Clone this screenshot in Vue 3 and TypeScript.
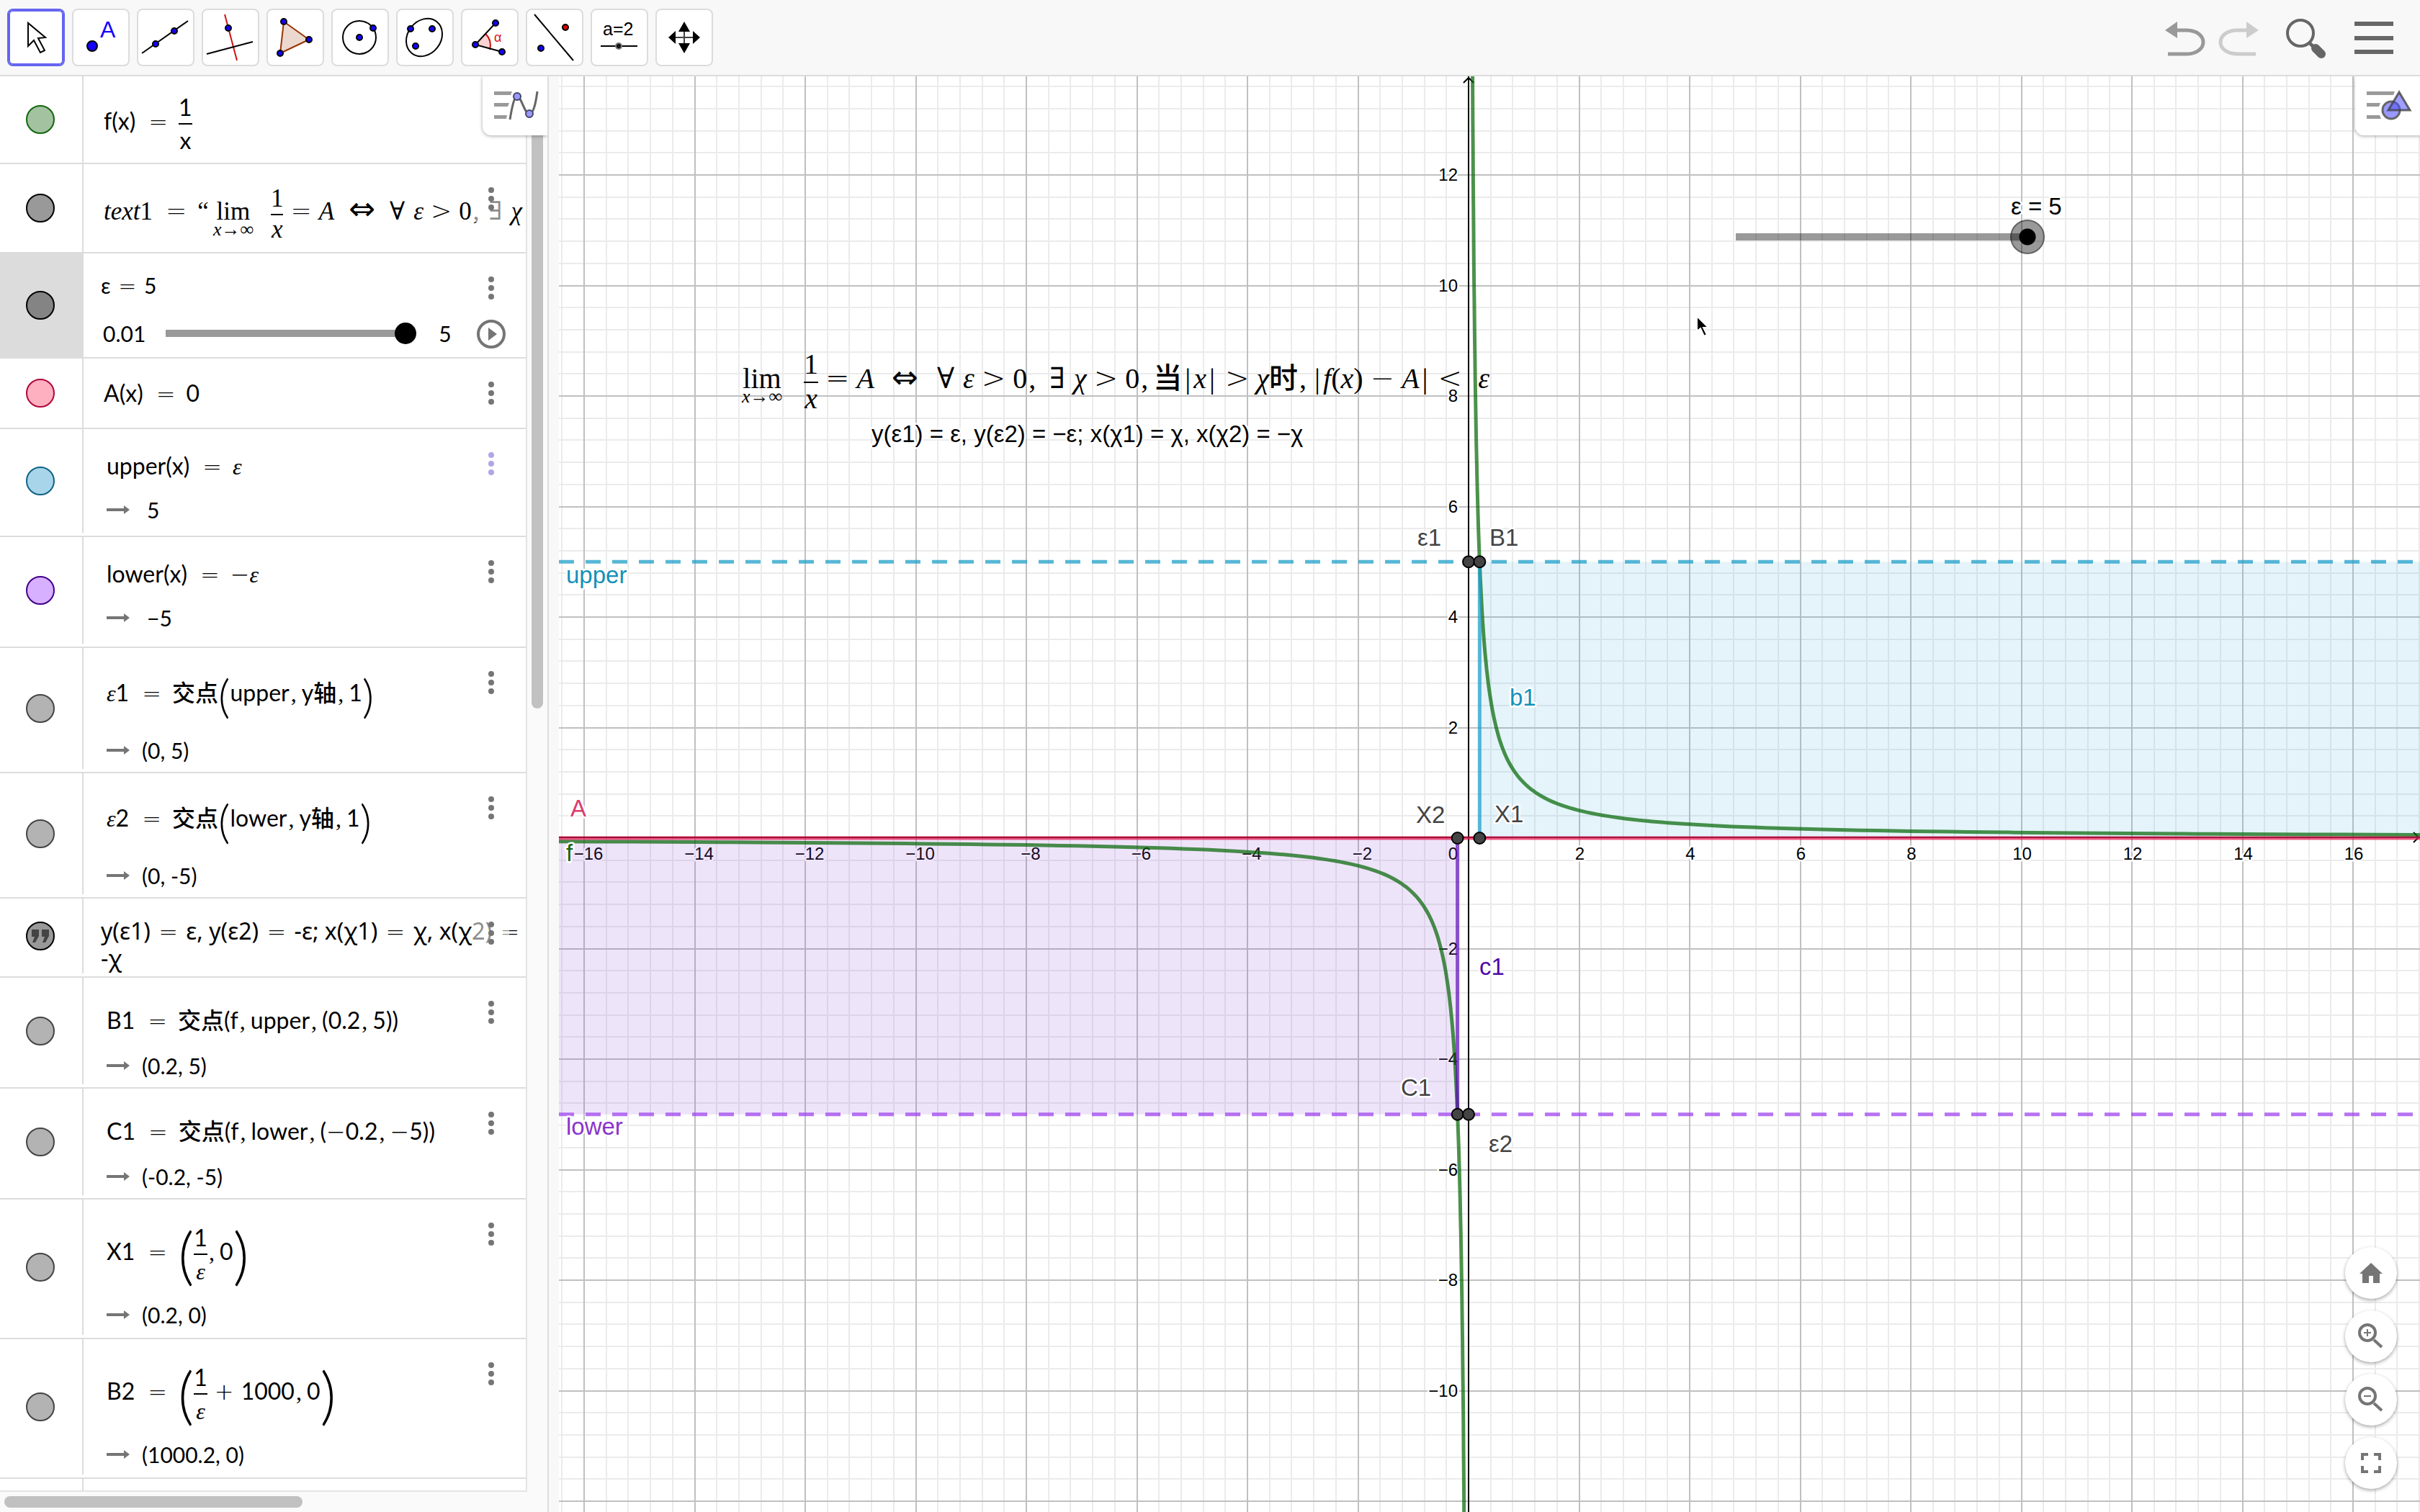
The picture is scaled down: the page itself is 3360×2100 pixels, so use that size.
<script setup lang="ts">
import { computed, h, onBeforeUnmount, onMounted, ref } from 'vue'
import type { FunctionalComponent, VNode } from 'vue'

/* ---------- Formula typesetting ---------- */

type Token =
  | { k: 'sans' | 'it' | 'rm' | 'def' | 'rel' | 'wide' | 'bin' | 'cjk' | 'punct' | 'big' | 'huge' | 'bar' | 'quote' | 'gap' | 'far'; v: string }
  | { k: 'frac'; n: Token; d: Token }
  | { k: 'lim'; v: string; sub: string }

const t = (k: Exclude<Token['k'], 'frac' | 'lim'>, v: string): Token => ({ k, v })
const frac = (n: Token, d: Token): Token => ({ k: 'frac', n, d })

const renderToken = (tok: Token): VNode => {
  if (tok.k === 'frac') {
    return h('span', { class: 'm-frac' }, [
      h('span', { class: 'm-num' }, [renderToken(tok.n)]),
      h('span', { class: 'm-den' }, [renderToken(tok.d)]),
    ])
  }
  if (tok.k === 'lim') {
    return h('span', { class: 'm-lim' }, [h('span', tok.v), h('span', { class: 'm-sub' }, tok.sub)])
  }
  return h('span', { class: 'm-' + tok.k }, tok.v)
}

const MathLine: FunctionalComponent<{ tokens: Token[] }> = (props) =>
  h('span', { class: 'm-line' }, props.tokens.map(renderToken))
MathLine.props = ['tokens']

const limitHead: Token[] = [
  { k: 'lim', v: 'lim', sub: 'x→∞' },
  frac(t('rm', '1'), t('it', 'x')),
  t('rel', '='),
  t('it', 'A'),
  t('wide', '⇔'),
  t('rm', '∀'),
  t('gap', 'ε'),
  t('rel', '>'),
  t('rm', '0'),
  t('punct', ','),
  t('far', '∃'),
  t('gap', 'χ'),
]

const limitStatement: Token[] = [
  ...limitHead,
  t('rel', '>'),
  t('rm', '0'),
  t('punct', ','),
  t('cjk', '当'),
  t('bar', '|'),
  t('it', 'x'),
  t('bar', '|'),
  t('rel', '>'),
  t('it', 'χ'),
  t('cjk', '时'),
  t('punct', ','),
  t('bar', '|'),
  t('it', 'f'),
  t('rm', '('),
  t('it', 'x'),
  t('rm', ')'),
  t('rel', '−'),
  t('it', 'A'),
  t('bar', '|'),
  t('rel', '<'),
  t('gap', 'ε'),
]

/* ---------- Algebra list ---------- */

interface Row {
  id: string
  kind: string
  fill: string
  line: string
  tokens?: Token[]
  text?: string
  out?: string
  slider?: boolean
  quote?: boolean
  menu?: 'grey' | 'lilac'
}

const grey = { fill: '#b3b3b3', line: '#444444' }
const eq = t('def', '=')

const rows: Row[] = [
  { id: 'f', kind: 'first', fill: '#a3c2a0', line: '#13660f', tokens: [t('sans', 'f(x)'), eq, frac(t('sans', '1'), t('sans', 'x'))] },
  { id: 'text1', kind: 'serif', fill: '#999999', line: '#000000', menu: 'grey', tokens: [t('it', 'text'), t('rm', '1'), eq, t('quote', '“'), ...limitHead] },
  { id: 'eps', kind: 'slider', fill: '#848484', line: '#000000', slider: true, text: 'ε = 5', menu: 'grey' },
  { id: 'A', kind: 'plain', fill: '#ffb0c0', line: '#b0063c', menu: 'grey', tokens: [t('sans', 'A(x)'), eq, t('sans', '0')] },
  { id: 'upper', kind: 'func', fill: '#a9d5ea', line: '#0f6384', menu: 'lilac', tokens: [t('sans', 'upper(x)'), eq, t('it', 'ε')], out: '5' },
  { id: 'lower', kind: 'func tall', fill: '#d7b0ff', line: '#40008c', menu: 'grey', tokens: [t('sans', 'lower(x)'), eq, t('bin', '−'), t('it', 'ε')], out: '−5' },
  { id: 'eps1', kind: 'cut', ...grey, menu: 'grey', tokens: [t('it', 'ε'), t('sans', '1'), eq, t('cjk', '交点'), t('big', '('), t('sans', 'upper'), t('punct', ','), t('sans', 'y'), t('cjk', '轴'), t('punct', ','), t('sans', '1'), t('big', ')')], out: '(0, 5)' },
  { id: 'eps2', kind: 'cut', ...grey, menu: 'grey', tokens: [t('it', 'ε'), t('sans', '2'), eq, t('cjk', '交点'), t('big', '('), t('sans', 'lower'), t('punct', ','), t('sans', 'y'), t('cjk', '轴'), t('punct', ','), t('sans', '1'), t('big', ')')], out: '(0, -5)' },
  { id: 'text2', kind: 'note', fill: '#999999', line: '#000000', quote: true, menu: 'grey', text: 'y(ε1) = ε, y(ε2) = -ε; x(χ1) = χ, x(χ2) = -χ' },
  { id: 'B1', kind: 'point', ...grey, menu: 'grey', tokens: [t('sans', 'B1'), eq, t('cjk', '交点'), t('sans', '(f'), t('punct', ','), t('sans', 'upper'), t('punct', ','), t('sans', '(0.2'), t('punct', ','), t('sans', '5))')], out: '(0.2, 5)' },
  { id: 'C1', kind: 'point', ...grey, menu: 'grey', tokens: [t('sans', 'C1'), eq, t('cjk', '交点'), t('sans', '(f'), t('punct', ','), t('sans', 'lower'), t('punct', ','), t('sans', '('), t('bin', '−'), t('sans', '0.2'), t('punct', ','), t('bin', '−'), t('sans', '5))')], out: '(-0.2, -5)' },
  { id: 'X1', kind: 'pair', ...grey, menu: 'grey', tokens: [t('sans', 'X1'), eq, t('huge', '('), frac(t('sans', '1'), t('it', 'ε')), t('punct', ','), t('sans', '0'), t('huge', ')')], out: '(0.2, 0)' },
  { id: 'B2', kind: 'pair', ...grey, menu: 'grey', tokens: [t('sans', 'B2'), eq, t('huge', '('), frac(t('sans', '1'), t('it', 'ε')), t('rel', '+'), t('sans', '1000'), t('punct', ','), t('sans', '0'), t('huge', ')')], out: '(1000.2, 0)' },
]

/* Splits a plain caption so that each equals sign can be set wider. */
const pieces = (s: string) => s.split(/(=)/)

/* ---------- Graphics view ---------- */

const epsilon = ref(5)
const canvas = ref<HTMLElement | null>(null)
const size = ref({ w: 2584, h: 1994 })
const origin = { x: 1263, y: 1058 }
const unit = 76.75

let observer: ResizeObserver | undefined
onMounted(() => {
  const el = canvas.value
  if (!el) return
  observer = new ResizeObserver(() => {
    size.value = { w: el.clientWidth, h: el.clientHeight }
  })
  observer.observe(el)
})
onBeforeUnmount(() => observer?.disconnect())

const sx = (x: number) => origin.x + x * unit
const sy = (y: number) => origin.y - y * unit

const range = (from: number, to: number) => Array.from({ length: Math.max(0, to - from + 1) }, (_, i) => from + i)
const step = 0.4
const cols = computed(() => range(Math.ceil(-origin.x / unit / step), Math.floor((size.value.w - origin.x) / unit / step)))
const lines = computed(() => range(Math.ceil((origin.y - size.value.h) / unit / step), Math.floor(origin.y / unit / step)))

const gridPath = (major: boolean) => {
  const v = cols.value.filter((i) => i !== 0 && (i % 5 === 0) === major).map((i) => `M${Math.round(sx(i * step))} 0V${size.value.h}`)
  const w = lines.value.filter((i) => i !== 0 && (i % 5 === 0) === major).map((i) => `M0 ${Math.round(sy(i * step))}H${size.value.w}`)
  return [...v, ...w].join('')
}
const minorGrid = computed(() => gridPath(false))
const majorGrid = computed(() => gridPath(true))

const tick = (n: number) => (n < 0 ? '−' + -n : String(n))
const xTicks = computed(() => cols.value.filter((i) => i % 5 === 0 && i !== 0).map((i) => (i / 5) * 2))
const yTicks = computed(() => lines.value.filter((i) => i % 5 === 0 && i !== 0).map((i) => (i / 5) * 2).filter((n) => sy(n) < size.value.h - 30))

const branch = (sign: 1 | -1) => {
  const pts: string[] = []
  for (let u = -3; u <= 3; u += 0.04) {
    const x = sign * Math.exp(u)
    pts.push(`${sx(x).toFixed(1)} ${sy(1 / x).toFixed(1)}`)
  }
  return 'M' + pts.join('L')
}
const curve = branch(1) + branch(-1)

const chi = computed(() => 1 / epsilon.value)
const dots = computed(() => [
  [0, epsilon.value], [chi.value, epsilon.value], [-chi.value, 0],
  [chi.value, 0], [-chi.value, -epsilon.value], [0, -epsilon.value],
])

const labels = [
  { s: 'upper', x: 10, y: 704, c: '#1591b8' },
  { s: 'lower', x: 10, y: 1470, c: '#8a35cc' },
  { s: 'A', x: 16, y: 1028, c: '#dc3c6e' },
  { s: 'f', x: 10, y: 1090, c: '#146414' },
  { s: 'ε1', x: 1192, y: 652, c: '#444444' },
  { s: 'B1', x: 1292, y: 652, c: '#444444' },
  { s: 'b1', x: 1320, y: 874, c: '#1591b8' },
  { s: 'X2', x: 1190, y: 1037, c: '#444444' },
  { s: 'X1', x: 1299, y: 1036, c: '#444444' },
  { s: 'c1', x: 1278, y: 1248, c: '#4f0aa8' },
  { s: 'C1', x: 1169, y: 1416, c: '#444444' },
  { s: 'ε2', x: 1291, y: 1494, c: '#444444' },
  { s: 'y(ε1) = ε, y(ε2) = −ε; x(χ1) = χ, x(χ2) = −χ', x: 434, y: 508, c: '#000000' },
  { s: 'ε = 5', x: 2016, y: 192, c: '#000000' },
]

const tools = ['移动', '点', '直线', '垂线', '多边形', '圆', '椭圆', '角度', '轴对称', '滑动条', '移动视图']
</script>

<template>
  <div class="app">
    <header class="toolbar">
      <nav class="tools" aria-label="工具">
        <button v-for="(name, i) in tools" :key="name" type="button" class="tool" :class="{ selected: i === 0 }" :aria-label="name">
          <svg viewBox="2 2 76 76" class="tool-icon">
            <path v-if="i === 0" d="M29 20V52L37 44L46 61L52 58L43 41L53 40Z" fill="#fff" stroke="#000" stroke-width="2" />
            <g v-else-if="i === 1">
              <circle cx="28" cy="52" r="7" class="pt" />
              <text x="39" y="40" font-size="32" fill="#1500ff">A</text>
            </g>
            <g v-else-if="i === 2">
              <path d="M7 62L71 17" class="ln" /><circle cx="26" cy="49" r="4" class="pt" /><circle cx="52" cy="31" r="4" class="pt" />
            </g>
            <g v-else-if="i === 3">
              <path d="M32 8L49 72" stroke="#cc1414" stroke-width="2" /><path d="M7 63L71 46" class="ln" /><circle cx="37" cy="27" r="4" class="pt" />
            </g>
            <g v-else-if="i === 4">
              <path d="M24 18L59 43L19 62Z" fill="#ebd8cf" stroke="#993300" stroke-width="2" />
              <circle cx="24" cy="18" r="4" class="pt" /><circle cx="59" cy="43" r="4" class="pt" /><circle cx="19" cy="62" r="4" class="pt" />
            </g>
            <g v-else-if="i === 5">
              <circle cx="39" cy="40" r="23" class="ln" /><circle cx="39" cy="40" r="4" class="pt" /><circle cx="58" cy="27" r="4" class="pt" />
            </g>
            <g v-else-if="i === 6">
              <ellipse cx="39" cy="40" rx="28" ry="23" transform="rotate(-52 39 40)" class="ln" />
              <circle cx="20" cy="28" r="4" class="pt" /><circle cx="50" cy="28" r="4" class="pt" /><circle cx="27" cy="52" r="4" class="pt" />
            </g>
            <g v-else-if="i === 7">
              <path d="M20 50L34 35A21 21 0 0 1 40 57Z" fill="#fbd3d3" /><path d="M34 35A21 21 0 0 1 40 57" fill="none" stroke="#cc1414" stroke-width="2" />
              <path d="M48 20L20 50L57 60" class="ln" />
              <circle cx="48" cy="20" r="4" class="pt" /><circle cx="20" cy="50" r="4" class="pt" /><circle cx="57" cy="60" r="4" class="pt" />
              <text x="46" y="46" font-size="18" fill="#e01414">α</text>
            </g>
            <g v-else-if="i === 8">
              <path d="M12 8L66 72" class="ln" /><circle cx="55" cy="26" r="4" fill="#d40000" stroke="#000" stroke-width="2" /><circle cx="21" cy="55" r="4" class="pt" />
            </g>
            <g v-else-if="i === 9">
              <text x="17" y="37" font-size="25" fill="#000">a=2</text><path d="M14 52H65" class="ln" />
              <circle cx="39" cy="52" r="5" fill="#777" /><circle cx="39" cy="52" r="3" fill="#111" />
            </g>
            <g v-else>
              <path d="M40 24V56M24 40H56" stroke="#444" stroke-width="2" />
              <path d="M40 18L48 32H32ZM40 62L48 48H32ZM18 40L28 31V49ZM62 40L52 31V49Z" fill="#000" />
            </g>
          </svg>
        </button>
      </nav>
      <div class="actions">
        <div class="history">
          <button type="button" class="bare" aria-label="撤销">
            <svg width="68" height="60" viewBox="0 0 68 60"><path d="M10 53H35C67 53 67 20 35 20H20" fill="none" stroke="#999" stroke-width="5" /><path d="M6 20L23 8V31Z" fill="#999" /></svg>
          </button>
          <button type="button" class="bare" aria-label="重做">
            <svg width="68" height="60" viewBox="0 0 68 60"><path d="M58 53H33C1 53 1 20 33 20H48" fill="none" stroke="#ccc" stroke-width="5" /><path d="M62 20L45 8V31Z" fill="#ccc" /></svg>
          </button>
        </div>
        <button type="button" class="bare" aria-label="搜索">
          <svg width="68" height="60" viewBox="0 0 68 60"><circle cx="26" cy="24" r="18" fill="none" stroke="#666" stroke-width="4" /><path d="M38 37L46 45" stroke="#666" stroke-width="5" /><path d="M47 45L55 53" stroke="#666" stroke-width="12" stroke-linecap="round" /></svg>
        </button>
        <button type="button" class="bare" aria-label="菜单">
          <svg width="68" height="60" viewBox="0 0 68 60"><path d="M7 11H61M7 31H61M7 50H61" stroke="#666" stroke-width="6" /></svg>
        </button>
      </div>
    </header>

    <main class="views">
      <section class="algebra" aria-label="代数区">
        <div class="algebra-main">
          <ol class="rows">
            <li v-for="row in rows" :key="row.id" class="row" :class="row.kind">
              <div class="marble-cell">
                <button type="button" class="marble" :aria-label="'显示 ' + row.id" :style="{ background: row.fill, borderColor: row.line }">
                  <svg v-if="row.quote" width="26" height="20" viewBox="0 0 26 20"><path d="M1 1H11V10L6 19H2L5 11H1ZM15 1H25V10L20 19H16L19 11H15Z" fill="#444" /></svg>
                </button>
              </div>
              <div class="content">
                <p v-if="row.text" class="plain-text"><template v-for="(s, i) in pieces(row.text)" :key="i"><span v-if="s === '='" class="equals">=</span><template v-else>{{ s }}</template></template></p>
                <div v-else class="input-line"><MathLine :tokens="row.tokens || []" /></div>
                <template v-if="row.slider">
                  <div class="slider-line">
                    <span>0.01</span>
                    <input v-model.number="epsilon" type="range" min="0.01" max="5" step="0.01" aria-label="ε" class="row-range" />
                    <span>5</span>
                  </div>
                  <button type="button" class="play" aria-label="播放"><svg width="12" height="18" viewBox="0 0 12 18"><path d="M0 0L12 9L0 18Z" fill="#757575" /></svg></button>
                </template>
                <div v-if="row.out" class="output-line">
                  <svg width="32" height="12" viewBox="0 0 32 12"><path d="M0 4H24V0L32 6L24 12V8H0Z" fill="#757575" /></svg>
                  <output :class="{ number: !row.out.startsWith('(') }">{{ row.out }}</output>
                </div>
                <button v-if="row.menu" type="button" class="more" :class="row.menu" :aria-label="'更多 ' + row.id"><i></i><i></i><i></i></button>
              </div>
            </li>
            <li class="row rest"><div class="marble-cell"></div></li>
          </ol>
          <div class="rail"><div class="rail-thumb"></div></div>
        </div>
        <div class="foot"><div class="foot-thumb"></div></div>
        <button type="button" class="tab" aria-label="代数区样式">
          <svg width="90" height="82" viewBox="0 0 90 82">
            <path d="M16 21H41L39 26H16ZM16 37H37L35 42H16ZM16 54H34L33 59H16Z" fill="#999" />
            <path d="M38 60C41 42 44 28 48 28C54 28 58 52 65 52C71 52 74 36 76 21" fill="none" stroke="#666" stroke-width="3" />
            <circle cx="48" cy="28" r="5" class="node" /><circle cx="65" cy="52" r="5" class="node" />
          </svg>
        </button>
      </section>

      <section ref="canvas" class="graphics" aria-label="绘图区">
        <svg class="plot" :width="size.w" :height="size.h">
          <path :d="minorGrid" stroke="#ebebeb" stroke-width="2" />
          <path :d="majorGrid" stroke="#c0c0c0" stroke-width="2" />
          <path :d="`M${origin.x} 0V${size.h}M0 ${origin.y - 1}H${size.w}`" stroke="#000" stroke-width="2" />
          <path :d="`M${origin.x - 7} 9L${origin.x} 2L${origin.x + 7} 9M${size.w - 9} ${origin.y - 8}L${size.w - 2} ${origin.y - 1}L${size.w - 9} ${origin.y + 6}`" fill="none" stroke="#000" stroke-width="2" />
          <g class="ticks">
            <text v-for="n in xTicks" :key="'x' + n" :x="sx(n) + (n < 0 ? 6 : 1)" :y="origin.y + 30" text-anchor="middle">{{ tick(n) }}</text>
            <text v-for="n in yTicks" :key="'y' + n" :x="origin.x - 15" :y="sy(n) + 8" text-anchor="end">{{ tick(n) }}</text>
            <text :x="origin.x - 15" :y="origin.y + 30" text-anchor="end">0</text>
          </g>
          <rect :x="sx(chi)" :y="sy(epsilon)" :width="size.w - sx(chi)" :height="epsilon * unit" fill="#4db3de" fill-opacity="0.15" />
          <rect x="0" :y="origin.y" :width="sx(-chi)" :height="epsilon * unit" fill="#8f4de0" fill-opacity="0.15" />
          <path :d="`M0 ${sy(epsilon)}H${size.w}`" class="dash" stroke="#1f9fc8" />
          <path :d="`M0 ${sy(-epsilon)}H${size.w}`" class="dash" stroke="#9f44ee" />
          <path :d="curve" fill="none" stroke="#006400" stroke-opacity="0.7" stroke-width="5" />
          <path :d="`M0 ${origin.y}H${size.w}`" stroke="#e6144b" stroke-opacity="0.7" stroke-width="5" />
          <path :d="`M${sx(chi)} ${sy(epsilon)}V${origin.y}`" stroke="#1f9fc8" stroke-opacity="0.75" stroke-width="5" />
          <path :d="`M${sx(-chi)} ${sy(-epsilon)}V${origin.y}`" stroke="#5a0ab4" stroke-opacity="0.7" stroke-width="5" />
          <circle v-for="(p, i) in dots" :key="i" :cx="sx(p[0])" :cy="sy(p[1])" r="8" fill="#444" stroke="#000" stroke-width="2" />
          <g class="labels">
            <text v-for="l in labels" :key="l.s" :x="l.x" :y="l.y" :fill="l.c">{{ l.s }}</text>
          </g>
        </svg>
        <div class="formula"><MathLine :tokens="limitStatement" /></div>
        <input v-model.number="epsilon" type="range" min="0.01" max="5" step="0.01" aria-label="ε = 5" class="graph-range" />
        <svg class="pointer" width="24" height="36" viewBox="0 0 24 36"><path d="M4 3V24L9 20L14 31L18 29L13 19H20Z" fill="#000" stroke="#fff" stroke-width="2" /></svg>
        <button type="button" class="tab right" aria-label="绘图区样式">
          <svg width="90" height="82" viewBox="0 0 90 82">
            <path d="M16 21H55L53 26H16ZM16 37H35L33 42H16ZM16 54H34L36 59H16Z" fill="#999" />
            <circle cx="50" cy="47" r="12" fill="#9999ff" stroke="#666" stroke-width="3" />
            <path d="M61 22L46 47H76Z" fill="#5050ff" fill-opacity="0.55" stroke="#444" stroke-opacity="0.8" stroke-width="3" />
          </svg>
        </button>
        <div class="zoomers">
          <button type="button" class="round" aria-label="标准视图"><svg width="40" height="40" viewBox="0 0 40 40"><path d="M20 6L4 21H8V34H17V24H23V34H32V21H36Z" fill="#757575" /></svg></button>
          <button type="button" class="round" aria-label="放大"><svg width="40" height="40" viewBox="0 0 40 40"><circle cx="15" cy="15" r="11" class="lens" /><path d="M10 15H20M15 10V20" stroke="#757575" stroke-width="2" /><path d="M24 25L35 35" stroke="#757575" stroke-width="4" /></svg></button>
          <button type="button" class="round" aria-label="缩小"><svg width="40" height="40" viewBox="0 0 40 40"><circle cx="15" cy="15" r="11" class="lens" /><path d="M10 15H20" stroke="#757575" stroke-width="2" /><path d="M24 25L35 35" stroke="#757575" stroke-width="4" /></svg></button>
          <button type="button" class="round" aria-label="全屏"><svg width="40" height="40" viewBox="0 0 40 40"><path d="M8 16V8H16M24 8H32V16M32 24V32H24M16 32H8V24" fill="none" stroke="#757575" stroke-width="4" /></svg></button>
        </div>
      </section>
    </main>
  </div>
</template>

<style>
body {
  margin: 0;
  overflow: hidden;
}
.m-line {
  white-space: nowrap;
}
.m-sans {
  font-family: Lato, sans-serif;
}
.m-it,
.m-gap {
  font-family: "Liberation Serif", serif;
  font-style: italic;
}
.m-gap {
  margin-left: 12px;
}
.m-rm,
.m-far,
.m-quote,
.m-bar {
  font-family: "Liberation Serif", "DejaVu Serif", serif;
}
.m-far {
  margin-left: 6px;
}
.m-quote {
  margin-right: 6px;
}
.m-bar {
  margin: 0 4px;
}
.m-def,
.m-rel,
.m-bin {
  font-family: "DejaVu Sans", sans-serif;
  font-weight: 200;
}
.m-def {
  margin: 0 15px 0 18px;
}
.m-rel {
  margin: 0 10px;
}
.m-wide {
  margin: 0 20px;
  font-family: "DejaVu Sans", sans-serif;
  font-size: 44px;
  line-height: 0;
}
.m-cjk {
  font-family: "Noto Sans CJK SC", sans-serif;
  font-weight: 500;
  line-height: 1;
}
.m-punct {
  font-family: "Liberation Serif", serif;
  margin: 0 7px 0 2px;
}
.m-big,
.m-huge {
  display: inline-block;
  font-family: Lato, sans-serif;
  font-weight: 300;
  line-height: 1;
  vertical-align: middle;
}
.m-big {
  font-size: 64px;
}
.m-huge {
  font-size: 86px;
}
.m-frac {
  display: inline-flex;
  flex-direction: column;
  vertical-align: middle;
  text-align: center;
  line-height: 1;
}
.m-num {
  border-bottom: 2px solid #000;
  padding-bottom: 6px;
}
.m-den {
  padding-top: 6px;
}
.serif .m-num,
.formula .m-num {
  padding-bottom: 4px;
}
.serif .m-den,
.formula .m-den {
  padding-top: 0;
}
.m-lim {
  display: inline-flex;
  flex-direction: column;
  align-items: center;
  font-family: "Liberation Serif", serif;
  line-height: 30px;
  margin-right: 24px;
}
.m-sub {
  font-family: "Liberation Serif", "DejaVu Serif", serif;
  font-size: 26px;
  font-style: italic;
  line-height: 20px;
}
.formula .m-lim {
  margin-right: 30px;
}
.formula .m-wide {
  margin: 0 26px 0 24px;
}
.formula .m-far {
  margin-left: 12px;
}
</style>

<style scoped>
.app {
  display: flex;
  flex-direction: column;
  height: 100vh;
  background: #f8f8f8;
  color: #000;
  font-family: Lato, "Noto Sans CJK SC", sans-serif;
}
button {
  font: inherit;
  padding: 0;
  border: 0;
  background: none;
  box-sizing: border-box;
}
.toolbar {
  display: flex;
  justify-content: space-between;
  align-items: center;
  padding: 12px 30px 12px 10px;
  border-bottom: 2px solid #dcdcdc;
}
.tools {
  display: flex;
  gap: 10px;
}
.tool {
  display: grid;
  place-items: center;
  width: 80px;
  height: 80px;
  border: 2px solid #dcdcdc;
  border-radius: 8px;
  background: #fff;
  overflow: hidden;
}
.tool.selected {
  border-color: #6464f0;
  box-shadow: inset 0 0 0 2px #6464f0;
}
.tool-icon {
  width: 76px;
  height: 76px;
  font-family: "Liberation Sans", sans-serif;
}
.pt {
  fill: #1500ff;
  stroke: #000;
  stroke-width: 2;
}
.ln {
  fill: none;
  stroke: #000;
  stroke-width: 2;
}
.actions {
  display: flex;
  align-items: center;
  gap: 26px;
}
.history {
  display: flex;
  gap: 6px;
}
.bare {
  display: grid;
}
.views {
  flex: 1;
  display: flex;
  gap: 14px;
  min-height: 0;
}
.algebra {
  position: relative;
  display: flex;
  flex-direction: column;
  width: 762px;
  flex: none;
  box-sizing: border-box;
  border-right: 2px solid #dcdcdc;
  background: #fafafa;
}
.algebra-main {
  flex: 1;
  display: flex;
  min-height: 0;
}
.rows {
  flex: 1;
  display: flex;
  flex-direction: column;
  margin: 0;
  padding: 0;
  list-style: none;
  overflow: hidden;
  background: #fff;
  border-right: 2px solid #e4e4e4;
  border-bottom: 2px solid #e4e4e4;
}
.row {
  display: flex;
  flex: none;
  box-sizing: border-box;
  border-bottom: 2px solid #dcdcdc;
}
.rest {
  flex: 1;
  border-bottom: 0;
}
.marble-cell {
  display: grid;
  place-items: center;
  width: 116px;
  padding-right: 2px;
  box-sizing: border-box;
  border-right: 2px solid #dcdcdc;
}
.slider .marble-cell {
  background: #dcdcdc;
}
.func .marble-cell,
.cut .marble-cell,
.note .marble-cell,
.point .marble-cell,
.pair .marble-cell {
  margin-bottom: 4px;
}
.marble {
  display: grid;
  place-items: center;
  width: 40px;
  height: 40px;
  border: 2px solid;
  border-radius: 50%;
}
.content {
  position: relative;
  flex: 1;
  min-width: 0;
  overflow: hidden;
  display: flex;
  flex-direction: column;
  padding-left: 32px;
  font-size: 30px;
}
.input-line {
  display: flex;
  align-items: center;
  box-sizing: border-box;
  font-size: 32px;
}
.output-line {
  display: flex;
  align-items: center;
  gap: 17px;
  height: 48px;
}
.number {
  padding-left: 7px;
}
.first .content,
.serif .content,
.plain .content {
  padding-left: 28px;
}
.first .input-line {
  height: 120px;
  padding-top: 12px;
}
.serif .input-line {
  height: 122px;
  padding-top: 14px;
  font-size: 35px;
}
.plain .input-line {
  height: 96px;
}
.func .input-line {
  height: 88px;
  padding-top: 14px;
}
.func {
  min-height: 150px;
}
.func.tall {
  min-height: 154px;
}
.cut .input-line {
  height: 118px;
  padding-top: 14px;
}
.cut {
  min-height: 174px;
}
.point .input-line {
  height: 98px;
  padding-top: 20px;
}
.point {
  min-height: 154px;
}
.pair .input-line {
  height: 136px;
  padding-top: 16px;
}
.pair {
  min-height: 194px;
}
.slider {
  min-height: 146px;
}
.slider .content,
.note .content {
  padding-left: 24px;
}
.plain-text {
  margin: 0;
  line-height: 38px;
}
.slider .plain-text {
  padding-top: 25px;
}
.note .plain-text {
  padding: 26px 0 6px;
  font-family: "Noto Sans", sans-serif;
  font-size: 32px;
}
.equals {
  margin: 0 3px;
  font-family: "DejaVu Sans", sans-serif;
  font-weight: 200;
  line-height: 1;
}
.slider-line {
  display: flex;
  align-items: center;
  height: 48px;
  padding-left: 3px;
  margin-top: 24px;
}
.row-range {
  appearance: none;
  width: 348px;
  height: 30px;
  margin: 0 31px 0 28px;
  background: linear-gradient(#999, #999) 0 10px / calc(100% - 15px) 10px no-repeat;
}
.row-range::-webkit-slider-thumb {
  appearance: none;
  width: 30px;
  height: 30px;
  border-radius: 50%;
  background: #000;
}
.play {
  position: absolute;
  right: 28px;
  bottom: 12px;
  display: grid;
  place-items: center;
  width: 40px;
  height: 40px;
  padding-left: 3px;
  border: 4px solid #757575;
  border-radius: 50%;
}
.more {
  position: absolute;
  top: 8px;
  right: 23px;
  display: flex;
  flex-direction: column;
  align-items: center;
  gap: 4px;
  width: 50px;
  height: 72px;
  padding-top: 24px;
  background: rgba(255, 255, 255, 0.55);
  color: #757575;
}
.more.lilac {
  color: #b0a6e6;
}
.more i {
  width: 8px;
  height: 8px;
  border-radius: 50%;
  background: currentColor;
}
.rail {
  width: 28px;
  display: flex;
  justify-content: center;
}
.rail-thumb {
  width: 16px;
  height: 878px;
  border-radius: 8px;
  background: #c1c1c1;
}
.foot {
  display: flex;
  align-items: center;
  height: 28px;
  padding-left: 6px;
}
.foot-thumb {
  width: 414px;
  height: 16px;
  border-radius: 8px;
  background: #c1c1c1;
}
.tab {
  position: absolute;
  top: 0;
  right: 0;
  display: grid;
  border-radius: 0 0 0 12px;
  background: #fff;
  box-shadow: 0 1px 5px rgba(0, 0, 0, 0.35);
  clip-path: inset(0 0 -8px -8px);
}
.node {
  fill: #9999ff;
  stroke: #444466;
  stroke-width: 2;
}
.graphics {
  position: relative;
  flex: 1;
  min-width: 0;
  overflow: hidden;
  background: #fff;
}
.plot {
  position: absolute;
  inset: 0;
  font-family: "Liberation Sans", sans-serif;
}
.ticks text,
.labels text {
  paint-order: stroke;
  stroke: #fff;
  stroke-width: 5px;
  stroke-linejoin: round;
}
.ticks {
  font-size: 24px;
}
.labels {
  font-size: 33px;
}
.dash {
  stroke-width: 5px;
  stroke-opacity: 0.75;
  stroke-dasharray: 21 16;
}
.formula {
  position: absolute;
  left: 254px;
  top: 378px;
  font-size: 40px;
}
.graph-range {
  position: absolute;
  left: 1634px;
  top: 199px;
  appearance: none;
  width: 429px;
  height: 48px;
  margin: 0;
  background: linear-gradient(rgba(0, 0, 0, 0.4), rgba(0, 0, 0, 0.4)) 0 19px / calc(100% - 24px) 10px no-repeat;
}
.graph-range::-webkit-slider-thumb {
  appearance: none;
  width: 48px;
  height: 48px;
  box-sizing: border-box;
  border: 2px solid rgba(0, 0, 0, 0.35);
  border-radius: 50%;
  background: radial-gradient(circle, #000 11px, rgba(0, 0, 0, 0.4) 12px);
}
.pointer {
  position: absolute;
  left: 1576px;
  top: 330px;
}
.zoomers {
  position: absolute;
  right: 32px;
  bottom: 32px;
  display: flex;
  flex-direction: column;
  gap: 16px;
}
.round {
  display: grid;
  place-items: center;
  width: 72px;
  height: 72px;
  border-radius: 50%;
  background: #fff;
  box-shadow: 0 2px 5px rgba(0, 0, 0, 0.35);
}
.lens {
  fill: none;
  stroke: #757575;
  stroke-width: 4;
}
</style>
